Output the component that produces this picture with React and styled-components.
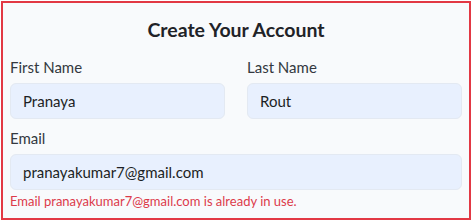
import React from "react";
import styled, { createGlobalStyle } from "styled-components";

const Global = createGlobalStyle`
  html, body { margin: 0; padding: 0; background: #ffffff; }
  body { padding: 1px 0 0 1px; font-family: "Lato", "Open Sans", sans-serif; }
  * { box-sizing: border-box; }
`;

const Card = styled.div`
  width: 470px;
  height: 219px;
  border: 2px solid #e23844;
  background: #f8fafc;
  padding: 15px 7px 0 7px;
  display: flex;
  flex-direction: column;
`;

const Title = styled.h2`
  margin: 0;
  font-size: 19.5px;
  line-height: 24px;
  font-weight: 700;
  color: #1f2328;
  text-align: center;
`;

const Row = styled.div`
  display: grid;
  grid-template-columns: 1fr 1fr;
  column-gap: 22px;
  margin-top: 15px;
`;

const Field = styled.div`
  display: flex;
  flex-direction: column;
  margin-top: ${(p) => p.$mt || 0}px;
`;

const Label = styled.label`
  font-size: 15px;
  line-height: 20px;
  color: #333840;
  margin-bottom: 6px;
`;

const Input = styled.input`
  height: 36px;
  width: 100%;
  border: 1px solid #e3e9f2;
  border-radius: 6px;
  background: #e8f0fe;
  padding: 0 12px;
  font-family: inherit;
  font-size: 15px;
  color: #1c1f24;
  outline: none;
`;

const ErrorText = styled.div`
  margin-top: 2px;
  font-size: 13px;
  line-height: 18px;
  color: #dc3a4a;
`;

export default function App() {
  return (
    <>
      <Global />
      <Card>
        <Title>Create Your Account</Title>
        <Row>
          <Field>
            <Label>First Name</Label>
            <Input defaultValue="Pranaya" />
          </Field>
          <Field>
            <Label>Last Name</Label>
            <Input defaultValue="Rout" />
          </Field>
        </Row>
        <Field $mt={9}>
          <Label>Email</Label>
          <Input defaultValue="pranayakumar7@gmail.com" />
          <ErrorText>Email pranayakumar7@gmail.com is already in use.</ErrorText>
        </Field>
      </Card>
    </>
  );
}
